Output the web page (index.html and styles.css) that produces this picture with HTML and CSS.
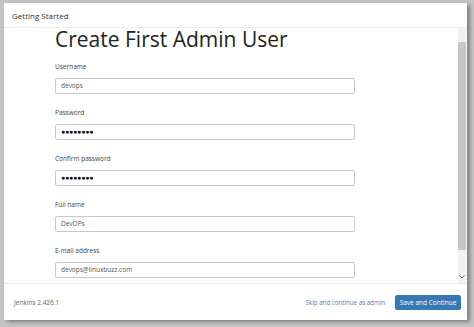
FILE: index.html
```html
<!DOCTYPE html>
<html lang="en">
<head>
<meta charset="utf-8">
<title>Getting Started</title>
<link rel="stylesheet" href="styles.css">
</head>
<body>
<div class="dialog">
  <div class="header">Getting Started</div>
  <div class="body">
    <div class="content">
      <h1 class="title">Create First Admin User</h1>
      <div class="field">
        <label class="label">Username</label>
        <div class="input">devops</div>
      </div>
      <div class="field">
        <label class="label">Password</label>
        <div class="input dots">&#9679;&#9679;&#9679;&#9679;&#9679;&#9679;&#9679;&#9679;</div>
      </div>
      <div class="field">
        <label class="label">Confirm password</label>
        <div class="input dots">&#9679;&#9679;&#9679;&#9679;&#9679;&#9679;&#9679;&#9679;</div>
      </div>
      <div class="field">
        <label class="label">Full name</label>
        <div class="input">DevOPs</div>
      </div>
      <div class="field">
        <label class="label">E-mail address</label>
        <div class="input">devops@linuxbuzz.com</div>
      </div>
    </div>
    <div class="scrollbar">
      <div class="sb-top"></div>
      <div class="sb-thumb"></div>
      <div class="sb-bottom">
        <svg class="sb-arrow" width="6" height="4" viewBox="0 0 6 4"><path d="M0.5 0.5 L3 3 L5.5 0.5" fill="none" stroke="#666" stroke-width="1"/></svg>
      </div>
    </div>
  </div>
  <div class="footer">
    <span class="version">Jenkins 2.426.1</span>
    <span class="spacer"></span>
    <a class="skip">Skip and continue as admin</a>
    <button class="save">Save and Continue</button>
  </div>
</div>
</body>
</html>
```
FILE: styles.css
```css
html, body {
  margin: 0;
  padding: 0;
  height: 100%;
}
body {
  background: #c4c4c4;
  font-family: "Open Sans", "Noto Sans", sans-serif;
  padding: 3px 0 0 4px;
  box-sizing: border-box;
}
.dialog {
  width: 463px;
  height: 317px;
  background: #fff;
  display: flex;
  flex-direction: column;
  box-shadow: 3px 2px 4px rgba(0,0,0,0.35);
}
.header {
  height: 24px;
  flex: none;
  border-bottom: 1px solid #eeeeee;
  font-size: 8px;
  color: #333;
  padding-left: 8px;
  display: flex;
  align-items: center;
}
.body {
  flex: 1;
  display: flex;
  min-height: 0;
}
.content {
  flex: 1;
  padding-left: 51px;
}
.title {
  margin: 0;
  font-weight: 400;
  font-size: 21px;
  color: #222;
  line-height: 22px;
  height: 31px;
}
.field {
  display: flex;
  flex-direction: column;
  width: 300px;
}
.label {
  font-size: 6.5px;
  color: #444;
  height: 9px;
  line-height: 9px;
  margin-top: 3px;
  margin-bottom: 7px;
}
.input {
  height: 14px;
  border: 1px solid #c8c8c8;
  border-radius: 2px;
  font-size: 6.5px;
  color: #555;
  padding-left: 5px;
  line-height: 14px;
  margin-bottom: 11px;
}
.field:last-child .input {
  margin-bottom: 0;
}
.dots {
  font-size: 7px;
  color: #111;
  letter-spacing: -0.2px;
}
.scrollbar {
  width: 8px;
  flex: none;
  display: flex;
  flex-direction: column;
  background: #f1f1f1;
  margin-right: 1px;
}
.sb-top {
  height: 14px;
}
.sb-thumb {
  height: 208px;
  background: #c6c6c6;
}
.sb-bottom {
  flex: 1;
  display: flex;
  align-items: flex-end;
  justify-content: center;
  padding-bottom: 4px;
}
.footer {
  height: 36px;
  flex: none;
  border-top: 1px solid #e8e8e8;
  display: flex;
  align-items: center;
  padding: 0 6px 0 10px;
  font-size: 6.5px;
}
.version {
  color: #666;
}
.spacer {
  flex: 1;
}
.skip {
  color: #4a7fb8;
  margin-right: 10px;
  font-size: 6.2px;
}
.save {
  font-family: inherit;
  font-size: 6.5px;
  color: #fff;
  background: #337ab7;
  border: none;
  border-radius: 2px;
  height: 15px;
  width: 66px;
  padding: 0;
}
```
